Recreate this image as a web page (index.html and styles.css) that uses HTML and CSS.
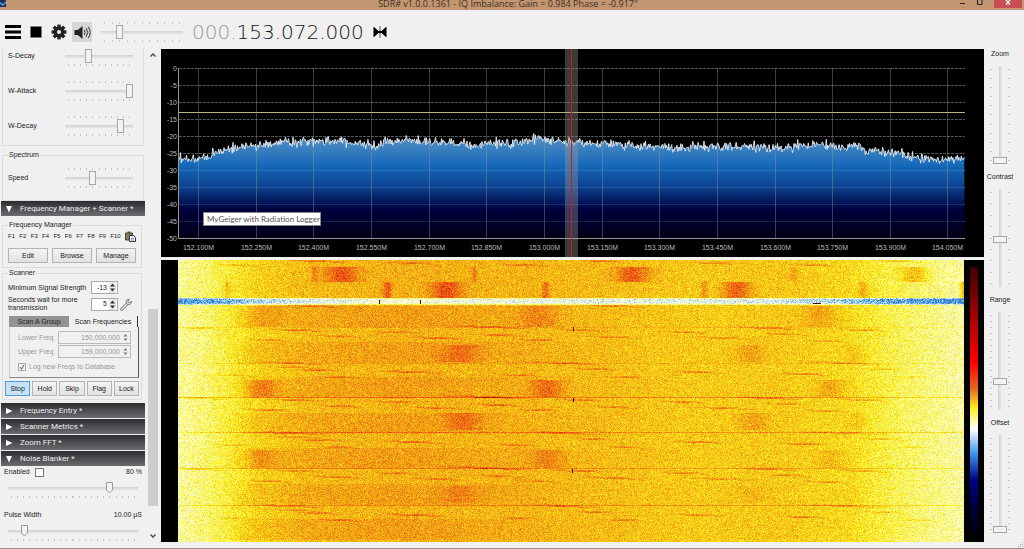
FILE: index.html
```html
<!DOCTYPE html>
<html lang="en">
<head>
<meta charset="utf-8">
<title>SDR#</title>
<link rel="stylesheet" href="styles.css">
</head>
<body>
<header class="titlebar">
  <div class="app"><svg width="6" height="7" viewBox="0 0 6 7"><rect width="6" height="7" fill="#1c2f5c"/><path d="M0 2l3 2 3-3v2L3 6 0 4z" fill="#4f9fd0"/></svg></div>
  <h1 class="title">SDR# v1.0.0.1361 - IQ Imbalance: Gain = 0.984 Phase = -0.917°</h1>
  <div class="window-buttons">
    <button class="win" aria-label="Minimize"><svg width="6" height="10" viewBox="0 0 6 10"><path d="M0 3.500h5" stroke="#222"/></svg></button>
    <button class="win" aria-label="Restore"><svg width="8" height="10" viewBox="0 0 8 10"><path d="M1.500 0v4.500h4.500V0" fill="none" stroke="#222"/></svg></button>
    <button class="win close" aria-label="Close"><svg width="6" height="10" viewBox="0 0 6 10"><path d="M1 4.500L5 0M1 0l4 4.500" stroke="#fff" stroke-width="1.200"/></svg></button>
  </div>
</header>

<div class="toolbar">
  <button class="tool" aria-label="Menu"><svg width="16" height="14" viewBox="0 0 16 14"><path d="M0 1.500h16M0 7h16M0 12.500h16" stroke="#000" stroke-width="2.800"/></svg></button>
  <button class="tool" aria-label="Stop radio"><svg width="12" height="12" viewBox="0 0 12 12"><path d="M.5 .5h11v11H.5z"/></svg></button>
  <button class="tool" aria-label="Settings"><svg width="16" height="16" viewBox="0 0 16 16"><g fill="#222"><circle cx="8" cy="8" r="5.400"/><path d="M6.300 .6h3.400v14.800H6.300z"/><path d="M6.300 .6h3.400v14.800H6.300z" transform="rotate(45 8 8)"/><path d="M6.300 .6h3.400v14.800H6.300z" transform="rotate(90 8 8)"/><path d="M6.300 .6h3.400v14.800H6.300z" transform="rotate(135 8 8)"/></g><circle cx="8" cy="8" r="2.100" fill="#f0f0f0"/></svg></button>
  <button class="tool speaker" aria-label="Mute"><svg width="17" height="15" viewBox="0 0 17 15"><path d="M.5 5h3.300L8.500 1v13L3.800 10H.5z" fill="#222"/><path d="M10.300 5q1.600 2.500 0 5M12.200 3.300q3 4.200 0 8.400M14.200 1.800q4 5.700 0 11.400" fill="none" stroke="#333"/></svg></button>
  <div class="slider volume"><input type="range" aria-label="Volume" min="0" max="100" value="20"></div>
  <output class="frequency"><span class="dim">000.</span>153.072.000</output>
  <button class="tool" aria-label="Center tuning"><svg width="14" height="12" viewBox="0 0 14 12"><path d="M.5 .5L6.500 6 .5 11.500zM13.500 .5L7.500 6l6 5.500z"/><path d="M7 0v12" stroke="#555"/><path d="M3 6h8" stroke="#000" stroke-width="2"/></svg></button>
</div>

<div class="workspace">
  <aside class="side">
    <div class="panels">
      <fieldset class="group fft">
        <div class="row first"><label for="sdecay">S-Decay</label><div class="slider lower"><input id="sdecay" type="range" value="33"></div></div>
        <div class="row"><label for="wattack">W-Attack</label><div class="slider"><input id="wattack" type="range" value="100"></div></div>
        <div class="row"><label for="wdecay">W-Decay</label><div class="slider"><input id="wdecay" type="range" value="85"></div></div>
      </fieldset>
      <fieldset class="group spectrum-group">
        <legend>Spectrum</legend>
        <div class="row"><label for="speed">Speed</label><div class="slider"><input id="speed" type="range" value="39"></div></div>
      </fieldset>

      <button class="section"><svg width="8" height="8" viewBox="0 0 8 8"><path d="M1 1h6L4 7.500z"/></svg>Frequency Manager + Scanner *</button>
      <fieldset class="group manager">
        <legend>Frequency Manager</legend>
        <div class="keys"><span>F1</span><span>F2</span><span>F3</span><span>F4</span><span>F5</span><span>F6</span><span>F7</span><span>F8</span><span>F9</span><span>F10</span>
          <button class="mini" aria-label="Paste"><svg width="11" height="11" viewBox="0 0 11 11"><path d="M.5 2h7v7h-7z" fill="#8a7a55" stroke="#444"/><path d="M2.500 .5h3v2h-3z" fill="#555"/><path d="M4.500 4.500h4l2 2v4h-6z" fill="#eef2f7" stroke="#334"/><path d="M6 7.500h3M6 9h3" stroke="#557" stroke-width=".6"/></svg></button></div>
        <div class="buttons wide"><button>Edit</button><button>Browse</button><button>Manage</button></div>
      </fieldset>

      <fieldset class="group scanner">
        <legend>Scanner</legend>
        <div class="setting"><label for="minsig">Minimum Signal Strength</label><span class="spin"><input id="minsig" type="text" value="-13"><svg width="7" height="11" viewBox="0 0 7 11"><path d="M1 4.500L3.500 1.500 6 4.500zM1 6.500L3.500 9.500 6 6.500z"/></svg></span></div>
        <div class="setting tall"><label for="wait">Seconds wait for more transmission</label><span class="spin"><input id="wait" type="text" value="5"><svg width="7" height="11" viewBox="0 0 7 11"><path d="M1 4.500L3.500 1.500 6 4.500zM1 6.500L3.500 9.500 6 6.500z"/></svg></span>
          <button class="mini" aria-label="Scanner options"><svg width="12" height="13" viewBox="0 0 12 13"><path d="M1.800 11.200L7.500 5.500" stroke="#666" stroke-width="3" stroke-linecap="round"/><path d="M1.800 11.200L7.500 5.500" stroke="#eee" stroke-width="1.500" stroke-linecap="round"/><path d="M9.500 1.200Q6 .8 6 4.200q.6 3 3.500 2.500Q12 6 11.300 3L9.300 5 7.700 3.800z" fill="#e4e4e4" stroke="#666" stroke-width=".8"/></svg></button></div>
        <div class="tabs" role="tablist"><button role="tab">Scan A Group</button><button role="tab" aria-selected="true">Scan Frequencies</button></div>
        <div class="tabpanel">
          <div class="freq"><label for="lower">Lower Freq</label><span class="spin off"><input id="lower" type="text" value="150,000,000" disabled><svg width="7" height="11" viewBox="0 0 7 11"><path d="M1.500 4.500L3.500 2 5.500 4.500zM1.500 6.500L3.500 9 5.500 6.500z"/></svg></span></div>
          <div class="freq"><label for="upper">Upper Freq</label><span class="spin off"><input id="upper" type="text" value="159,000,000" disabled><svg width="7" height="11" viewBox="0 0 7 11"><path d="M1.500 4.500L3.500 2 5.500 4.500zM1.500 6.500L3.500 9 5.500 6.500z"/></svg></span></div>
          <label class="check"><input type="checkbox" checked disabled>Log new Freqs to Database</label>
        </div>
        <div class="buttons"><button class="active">Stop</button><button>Hold</button><button>Skip</button><button>Flag</button><button>Lock</button></div>
      </fieldset>

      <div class="sections">
        <button class="section"><svg width="8" height="8" viewBox="0 0 8 8"><path d="M1 1v6l6.500-3z"/></svg>Frequency Entry *</button>
        <button class="section"><svg width="8" height="8" viewBox="0 0 8 8"><path d="M1 1v6l6.500-3z"/></svg>Scanner Metrics *</button>
        <button class="section"><svg width="8" height="8" viewBox="0 0 8 8"><path d="M1 1v6l6.500-3z"/></svg>Zoom FFT *</button>
        <button class="section"><svg width="8" height="8" viewBox="0 0 8 8"><path d="M1 1h6L4 7.500z"/></svg>Noise Blanker *</button>
      </div>
      <div class="blanker">
        <div class="line"><label class="enable">Enabled<input type="checkbox"></label><span>80 %</span></div>
        <div class="slider lower long"><input type="range" aria-label="Noise blanker threshold" value="80"></div>
        <div class="line pulse"><label for="pulse">Pulse Width</label><span>10.00 µS</span></div>
        <div class="slider lower long"><input id="pulse" type="range" value="10"></div>
      </div>
    </div>
    <div class="scrollbar">
      <svg width="8" height="6" viewBox="0 0 8 6"><path d="M1.500 4.500L4 2l2.500 2.500" fill="none" stroke="#444" stroke-width="1.300"/></svg>
      <div class="track"><div class="thumb"></div></div>
      <svg width="8" height="6" viewBox="0 0 8 6"><path d="M1.500 1.500L4 4l2.500-2.500" fill="none" stroke="#444" stroke-width="1.300"/></svg>
    </div>
  </aside>

  <main class="displays">
    <svg class="spectrum" id="spectrum" viewBox="0 0 823 208">
      <defs><linearGradient id="fill" gradientUnits="userSpaceOnUse" x1="0" y1="85" x2="0" y2="190">
        <stop offset="0" stop-color="#5a94c6"/><stop offset=".3" stop-color="#1668b8"/><stop offset=".5" stop-color="#0c4390"/><stop offset=".72" stop-color="#00003e"/><stop offset="1" stop-color="#000014"/>
      </linearGradient></defs>
      <rect width="823" height="208" fill="#000"/>
      <g id="hgrid" class="hgrid"></g>
      <path id="area" fill="url(#fill)"/>
      <g id="veil" class="veil"></g>
      <g id="vgrid" class="vgrid"></g>
      <path d="M17.500 19v170.500H804" class="axis"/>
      <path d="M18 63.500H804" class="squelch"/>
      <path id="trace" class="trace"/>
      <rect x="404" y="0" width="13" height="208" fill="#999" fill-opacity=".38"/>
      <rect x="410" y="0" width="1" height="208" class="tuned"/>
      <g id="labels" class="labels"></g>
      <rect x="42.500" y="163.500" width="117" height="13" fill="#fff" stroke="#888"/>
      <text x="46" y="173" class="tip">MyGeiger with Radiation Logger</text>
    </svg>
    <div class="waterfall">
      <div class="picture"><canvas id="fall" width="786" height="282"></canvas></div>
      <div class="palette"></div>
    </div>
  </main>

  <aside class="controls">
    <div class="vcontrol"><label for="zoom">Zoom</label><div class="vslider"><input id="zoom" type="range" value="0"></div></div>
    <div class="vcontrol t8"><label for="contrast">Contrast</label><div class="vslider"><input id="contrast" type="range" value="48"></div></div>
    <div class="vcontrol t15"><label for="range">Range</label><div class="vslider"><input id="range" type="range" value="28"></div></div>
    <div class="vcontrol t15"><label for="offset">Offset</label><div class="vslider"><input id="offset" type="range" value="0"></div></div>
  </aside>
</div>
<footer class="status"><svg width="7" height="6" viewBox="0 0 7 6"><path d="M5 0h1v1H5zM3 2h1v1H3zM5 2h1v1H5zM1 4h1v1H1zM3 4h1v1H3zM5 4h1v1H5z" fill="#aaa"/></svg></footer>
<script src="displays.js"></script>
</body>
</html>
```
FILE: styles.css
```css
* { box-sizing: border-box; }
body {
  margin: 0;
  background: #f0f0f0;
  color: #222;
  font: 7px/10px "Liberation Sans", Arial, sans-serif;
}
button, input, output { font: inherit; color: inherit; }
button { padding: 0; border: 0; background: none; }
svg { display: block; flex: none; }

.titlebar {
  display: flex;
  justify-content: space-between;
  height: 10px;
  overflow: hidden;
  background: #c19670;
}
.titlebar > * { flex: 1; }
.titlebar .title {
  flex: none;
  margin: 0;
  padding-right: 6px;
  font: 9px/7px "Open Sans", sans-serif;
  color: #40301f;
  white-space: nowrap;
}
.window-buttons { display: flex; justify-content: flex-end; gap: 10px; padding-right: 2px; }
.win { display: flex; justify-content: center; }
.close { width: 28px; height: 8px; background: #c94f52; }

.toolbar { display: flex; align-items: center; height: 39px; padding: 5px 5px 0; gap: 9px; }
.toolbar { padding-bottom: 0; }
.tool { display: flex; align-items: center; justify-content: center; }
.speaker { width: 20px; height: 20px; margin-left: -4px; background: #d6d6d6; }
.volume { width: 82px; }
.frequency { font: 200 20px/24px "DejaVu Sans", sans-serif; color: #111; }
.dim { color: #999; }

.workspace { display: grid; grid-template-columns: 161px minmax(0, 1fr) 40px; }

/* Sliders: a groove, a thumb and a row of ticks on one or both sides */
.slider { display: grid; grid-template-rows: 2px 14px 2px; gap: 1px; --n: 10; }
.slider::before, .slider::after {
  content: "";
  margin: 0 3px;
  background: repeating-linear-gradient(90deg, #c6c6c6 0 1px, transparent 1px calc((100% - 1px) / var(--n)));
}
.slider.lower { grid-template-rows: 14px 2px; }
.slider.lower::before { display: none; }
.long { --n: 20; }
input[type=range] {
  appearance: none;
  width: 100%;
  height: 14px;
  margin: 0;
  background: linear-gradient(#d2d2d2, #e6e6e6) center / 100% 3px no-repeat;
}
input[type=range]::-webkit-slider-thumb {
  appearance: none;
  width: 7px;
  height: 14px;
  border: 1px solid #a6a6a6;
  background: #f2f2f2;
}
.long input[type=range]::-webkit-slider-thumb {
  width: 9px;
  height: 12px;
  border: 0;
  background: url("data:image/svg+xml,%3Csvg xmlns='http://www.w3.org/2000/svg' width='9' height='12'%3E%3Cpath d='M1.500 .5h6v7.500l-3 3-3-3z' fill='%23f2f2f2' stroke='%23999'/%3E%3C/svg%3E") no-repeat;
}

.side { display: flex; min-width: 0; }
.panels { flex: 1; min-width: 0; padding-left: 1px; }
.group { margin: 0 6px 0 1px; padding: 0 5px; border: 1px solid #dcdcdc; min-width: 0; }
legend { padding: 0 1px; height: 10px; }
.fft { border-top: 0; padding-bottom: 9px; margin-right: 4px; }
.row { display: grid; grid-template-columns: 1fr 68px; align-items: center; padding-right: 5px; }
.row + .row { margin-top: 15px; }
.row.first { align-items: start; line-height: 14px; }
.spectrum-group { margin: 4px 4px 0 1px; padding: 8px 5px 12px; }

.section {
  display: flex;
  align-items: center;
  gap: 7px;
  width: 144px;
  height: 15px;
  padding-left: 4px;
  font: 8px/14px Roboto, sans-serif;
  color: #eee;
  background: linear-gradient(#2c2c30, #4c4c50 50%, #6c6c70);
}
.section svg { fill: #fff; }
.sections { display: grid; gap: 1px; margin-top: 3px; }

.manager { margin-top: 4px; }
.keys { display: flex; align-items: center; justify-content: space-between; height: 12px; font-size: 6px; }
.mini { display: flex; }
.buttons { display: flex; gap: 2px; }
.buttons button {
  flex: 1;
  height: 15px;
  border: 1px solid #b4b4b4;
  background: linear-gradient(#f2f2f2, #e2e2e2);
}
.buttons .active { border-color: #4f9ad8; background: #c5e2f8; }
.buttons.wide { gap: 4px; margin: 6px 0 4px; }

.scanner { padding: 3px 2px; }
.scanner legend { margin-left: 3px; }
.setting { display: grid; grid-template-columns: 81px 27px 12px; column-gap: 2px; align-items: center; padding-left: 3px; }
.setting.tall { height: 16px; margin-top: 2px; line-height: 8px; }
.setting label { white-space: nowrap; }
.setting.tall label { white-space: normal; }
.spin { display: flex; align-items: center; height: 13px; padding: 0 1px; border: 1px solid #aaa; background: #fff; }
.spin input { flex: 1; width: 0; min-width: 0; padding: 0 2px; border: 0; background: none; text-align: right; line-height: 10px; }
.spin svg { fill: #333; background: #e8e8e8; }
.spin.off { background: #f0f0f0; border-color: #bbb; }
.spin.off svg { fill: #777; background: none; }
.tabs { display: grid; grid-template-columns: 60px 1fr; margin: 4px 1px 0 4px; height: 11px; }
.tabs button { background: #929292; white-space: nowrap; }
.tabs [aria-selected=true] { background: #f0f0f0; border-right: 1px solid #333; }
.tabpanel { margin: 0 0 3px 4px; padding: 4px 7px 5px 8px; border-right: 1px solid #555; border-bottom: 1px solid #888; border-left: 1px solid #ccc; color: #999; }
.freq { display: grid; grid-template-columns: 40px 1fr; align-items: center; margin-bottom: 1px; }
.check { display: flex; align-items: center; gap: 3px; margin-top: 4px; }
input[type=checkbox] {
  appearance: none;
  width: 8px;
  height: 8px;
  margin: 0;
  border: 1px solid #777;
  background: #fff;
}
input[type=checkbox]:checked {
  background: #f4f4f4 url("data:image/svg+xml,%3Csvg xmlns='http://www.w3.org/2000/svg' width='6' height='6'%3E%3Cpath d='M1 3l1.500 2L5 1' fill='none' stroke='%23777' stroke-width='1.200'/%3E%3C/svg%3E");
  border-color: #aaa;
}

.blanker { padding: 0 6px 0 3px; }
.line { display: flex; justify-content: space-between; align-items: center; height: 12px; }
.enable { display: flex; align-items: center; gap: 5px; }
.enable input { width: 9px; height: 9px; }
.long { margin: 3px 4px 0; }
.pulse { margin-top: 11px; }

.scrollbar { width: 13px; display: flex; flex-direction: column; align-items: center; padding: 3px 3px 3px 0; }
.track { flex: 1; width: 10px; display: flex; flex-direction: column; justify-content: flex-end; padding-bottom: 27px; background: #f0f0f0; }
.thumb { height: 44%; background: #cdcdcd; }

.displays { display: flex; flex-direction: column; gap: 3px; }
.spectrum { width: 100%; height: auto; }
.hgrid { stroke: #555; stroke-dasharray: 3 1; fill: none; }
.veil { stroke: #9cf; stroke-opacity: .16; fill: none; }
.vgrid { stroke: #999; stroke-opacity: .4; fill: none; }
.axis { stroke: #999; fill: none; }
.squelch { stroke: #b9b27a; }
.trace { fill: none; stroke: #e4edf4; stroke-width: .9; }
.tuned { fill: #cc1c1c; }
.labels { font-size: 7px; fill: #bbb; }
.tip { font: 8px Lato, sans-serif; fill: #555; }

.waterfall { display: flex; padding-left: 17px; background: #000; }
.picture { flex: 1; min-width: 0; }
.picture canvas { display: block; width: 100%; height: auto; }
.palette {
  width: 8px;
  margin: 7px 6px 9px;
  background: linear-gradient(#400000, #900000 15%, #f00 36%, #e86a20 46%, #ffee20 53%, #fff 61%, #3c98f0 70%, #00008c 80%, #000030 92%, #000014);
}

.controls { display: flex; flex-direction: column; align-items: center; gap: 8px; }
.vcontrol { display: flex; flex-direction: column; align-items: center; gap: 7px; --n: 10; padding-right: 8px; }
.t8 { --n: 8; }
.t15 { --n: 15; }
.vslider { display: grid; grid-template-columns: 2px 14px 2px; gap: 1px; height: 98px; }
.vslider::before, .vslider::after {
  content: "";
  margin: 3px 0;
  background: repeating-linear-gradient(#c6c6c6 0 1px, transparent 1px calc((100% - 1px) / var(--n)));
}
.vslider input[type=range] {
  writing-mode: vertical-lr;
  direction: rtl;
  width: 14px;
  height: 100%;
  background: linear-gradient(90deg, #d2d2d2, #e6e6e6) center / 3px 100% no-repeat;
}
.vslider input[type=range]::-webkit-slider-thumb { width: 14px; height: 7px; }

.status { display: flex; justify-content: flex-end; height: 7px; border-bottom: 1px solid #9a9088; }
```
FILE: displays.js
```js
let seed = 7;
function rnd() {
  seed = (seed * 1664525 + 1013904223) >>> 0;
  return seed / 4294967296;
}
function noise() { return rnd() + rnd() + rnd() - 1.5; }
function lerp(points, x) {
  for (let i = 1; i < points.length; i++) {
    if (x <= points[i][0]) {
      const a = points[i - 1], b = points[i];
      return a[1] + (b[1] - a[1]) * (x - a[0]) / (b[0] - a[0]);
    }
  }
  return points[points.length - 1][1];
}

/* Spectrum */
const level = [[17, 108], [27, 111], [40, 109], [50, 106], [62, 102], [80, 97], [97, 97], [125, 93], [155, 92], [180, 93], [210, 96], [225, 93], [255, 92], [280, 94], [310, 96], [340, 94], [364, 93], [376, 89], [390, 92], [440, 95], [480, 97], [520, 99], [550, 97], [580, 98], [610, 99], [640, 97], [664, 95], [680, 100], [692, 96], [705, 101], [728, 103], [760, 108], [785, 111], [804, 109]];
let d = "";
for (let x = 18; x <= 803.5; x += 0.75) {
  const y = lerp(level, x) + noise() * 5;
  d += (d ? "L" : "M") + x + " " + y.toFixed(1);
}
document.getElementById("trace").setAttribute("d", d);
document.getElementById("area").setAttribute("d", d + "L803.5 189L18 189Z");

let h = "", v = "", t = "", veil = "";
for (let i = 0; i <= 10; i++) {
  const y = 19.5 + i * 17;
  if (i < 10) h += `<path d="M18 ${y}H804"/>`;
  if (i > 5 && i < 10) veil += `<path d="M18 ${y}H804"/>`;
  t += `<text x="16" y="${y + 2.5}" text-anchor="end">${i ? -5 * i : 0}</text>`;
}
for (let i = 0; i < 14; i++) {
  const x = Math.round(37 + i * 57.65) + 0.5;
  v += `<path d="M${x} 19V189"/>`;
  t += `<text x="${x}" y="201" text-anchor="middle">${(152.1 + i * 0.15).toFixed(3)}M</text>`;
}
document.getElementById("hgrid").innerHTML = h;
document.getElementById("veil").innerHTML = veil;
document.getElementById("vgrid").innerHTML = v;
document.getElementById("labels").innerHTML = t;

/* Waterfall */
const W = 786, H = 282;
const power = new Float32Array(W * H);
const base = [[0, 0.32], [25, 0.37], [50, 0.45], [80, 0.54], [130, 0.6], [220, 0.63], [330, 0.62], [420, 0.6], [520, 0.56], [600, 0.57], [670, 0.52], [710, 0.43], [750, 0.36], [786, 0.31]];
const warm = [[0, 0], [45, 0], [75, 0.05], [180, 0.06], [260, 0.05], [400, 0.01], [786, 0]];
for (let y = 0; y < H; y++) {
  const inBand = y > 45 && (y - 46) % 35.5 < 21;
  for (let x = 0; x < W; x++) {
    let p = lerp(base, x);
    if (inBand) p += lerp(warm, x);
    if (y < 38) p += 0.01;
    power[y * W + x] = p;
  }
}
function blob(cx, w, top, bottom, amount) {
  for (let y = top; y < bottom; y++)
    for (let x = Math.max(0, cx - w * 2); x < Math.min(W, cx + w * 2); x++)
      power[y * W + x] += amount * Math.exp(-Math.pow((x - cx) / w, 2));
}
[[136, 3, .13], [163, 17, .24], [296, 2, .16], [454, 17, .25], [615, 4, .1], [736, 14, .2]].forEach(b => blob(b[0], b[1], 7, 22, b[2]));
[[49, 3, .12], [209, 4, .22], [268, 15, .25], [367, 3, .2], [526, 3, .14], [558, 14, .25], [685, 4, .15], [785, 3, .3]].forEach(b => blob(b[0], b[1], 22, 38, b[2]));
[[87, 20, .08], [360, 20, .11], [642, 18, .12]].forEach(b => blob(b[0], b[1], 46, 67, b[2]));
[[282, 18, .14], [572, 14, .1], [676, 9, .07]].forEach(b => { blob(b[0], b[1], 85, 102, b[2]); blob(b[0] + 3, b[1], 153, 170, b[2]); blob(b[0], b[1], 226, 243, b[2] - .05); });
[[84, 15, .17], [369, 16, .17], [652, 15, .12]].forEach(b => { blob(b[0], b[1], 120, 137, b[2]); blob(b[0], b[1], 190, 208, b[2] - .05); });

[[67, .06], [103, .07], [137, .17], [172, .15], [208, .12], [245, .14]].forEach(r => {
  for (let x = 0; x < W; x++) power[r[0] * W + x] += r[1];
});
function streak(cx, y, w, amount) {
  for (let x = Math.max(0, cx - w); x < Math.min(W, cx + w); x++) {
    const row = Math.round(y + (x - cx) * 0.035);
    const near = 1 - Math.abs(x - cx) / w;
    if (row >= 0 && row < H) power[row * W + x] += amount * (0.2 + 0.8 * near);
    if (row > 0 && row < H) power[(row - 1) * W + x] += amount * 0.7 * near;
  }
}
const cycle = [[110, 1, 40, .17], [385, 1, 38, .2], [668, 1, 45, .18], [115, 5, 30, .14], [418, 7, 22, .18], [706, 7, 22, .16], [140, 8, 26, .2], [235, 10, 34, .22], [520, 10, 28, .22], [341, 13, 22, .18], [626, 12, 26, .22], [55, 13, 25, .12], [160, 15, 22, .18], [447, 15, 20, .18], [735, 15, 20, .14]];
[102, 172, 245].forEach(top => cycle.forEach(s => streak(s[0], top + s[1], s[2], s[3])));
[67, 137, 208].forEach(top => {
  [[20, 1, 30], [310, 0, 50], [590, 1, 35], [403, 3, 30], [118, 3, 32], [686, 3, 28], [218, 5, 24], [505, 5, 26], [320, 8, 28], [608, 7, 24], [160, 9, 26], [435, 10, 30], [545, 11, 34], [260, 11, 30], [360, 13, 22], [90, 13, 25], [648, 14, 24]].forEach(s => streak(s[0], top + s[1], s[2], .15 + rnd() * .07));
});
[[58, 5, 22], [140, 1, 30], [235, 3, 25], [345, 5, 26], [425, 1, 22], [535, 3, 28], [635, 5, 28], [720, 1, 26], [135, 46, 28], [437, 46, 30]].forEach(s => streak(s[0], s[1], s[2], .18));
for (let i = 0; i < 26; i++) streak(Math.floor(40 + rnd() * 640), Math.floor(252 + rnd() * 29), 18 + rnd() * 20, .12);

const stripe = [[0, 0.02], [40, 0.04], [75, 0.13], [130, 0.2], [220, 0.25], [320, 0.22], [420, 0.2], [520, 0.2], [600, 0.18], [660, 0.13], [710, 0.04], [786, 0]];
for (let y = 38; y < 45; y++)
  for (let x = 0; x < W; x++)
    power[y * W + x] = lerp(stripe, x) + (y === 38 || y === 44 ? 0.12 : 0) + (y > 42 ? .04 : 0);

const stops = [[-0.1, [30, 90, 190]], [0.03, [80, 160, 225]], [0.14, [185, 220, 235]], [0.23, [255, 255, 225]], [0.36, [254, 250, 125]], [0.48, [254, 234, 30]], [0.62, [247, 183, 18]], [0.74, [238, 135, 20]], [0.9, [240, 70, 20]], [1.1, [150, 15, 0]]];
function color(p, c) { return lerp(stops.map(s => [s[0], s[1][c]]), Math.max(-0.1, p)); }
const table = [];
for (let i = 0; i <= 240; i++) table.push([0, 1, 2].map(c => color(i / 200 - 0.1, c)));
const ctx = document.getElementById("fall").getContext("2d");
const img = ctx.createImageData(W, H);
for (let i = 0; i < W * H; i++) {
  const p = power[i] + noise() * 0.11;
  const c = table[Math.max(0, Math.min(240, Math.round((p + 0.1) * 200)))];
  const shade = 1 + noise() * 0.09;
  for (let k = 0; k < 3; k++) img.data[i * 4 + k] = c[k] * shade;
  img.data[i * 4 + 3] = 255;
}
ctx.putImageData(img, 0, 0);
ctx.fillStyle = "#401008";
[[395, 67], [395, 138], [394, 209], [201, 40], [242, 40]].forEach(m => ctx.fillRect(m[0], m[1], 1, 4));
ctx.fillRect(635, 43, 8, 1);
```
